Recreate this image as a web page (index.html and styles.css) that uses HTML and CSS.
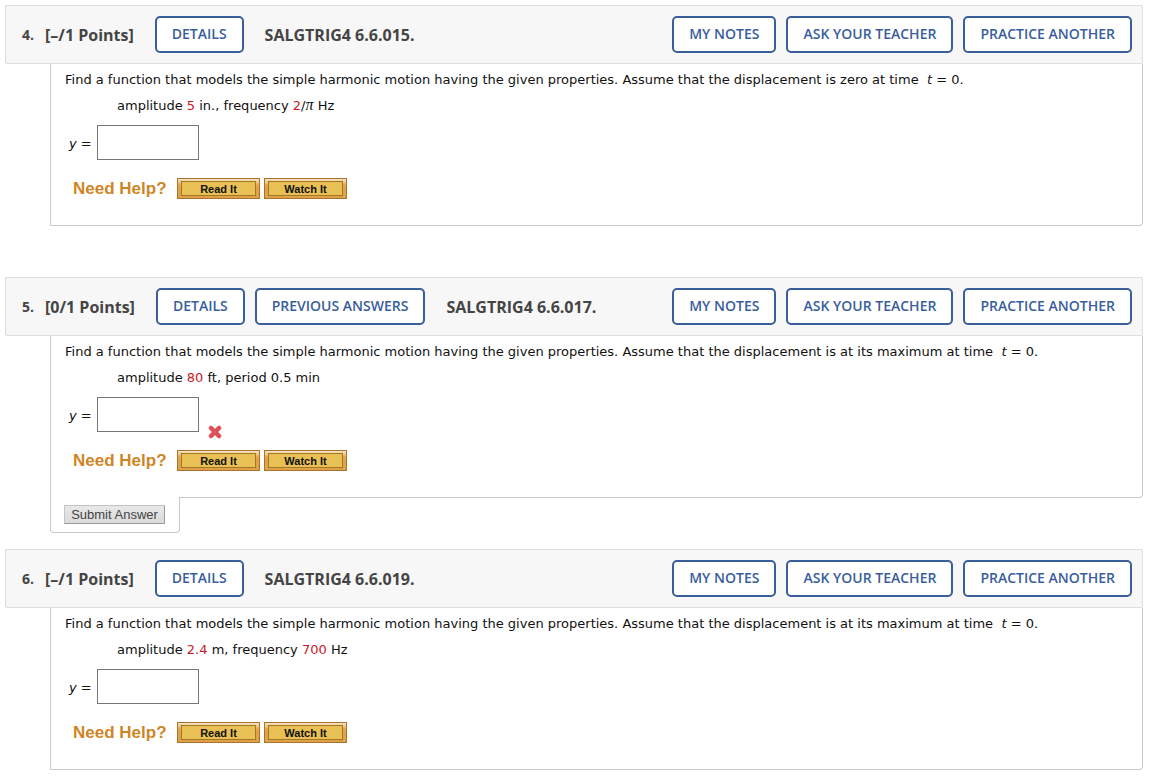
FILE: index.html
```
<!DOCTYPE html>
<html lang="en">
<head>
    <meta charset="UTF-8">
    <meta name="viewport" content="width=device-width, initial-scale=1.0">
    <title>Simple Harmonic Motion</title>
    <link rel="stylesheet" href="styles.css">
</head>
<body>

<section class="question">
    <div class="question-header">
        <span class="number">4.</span>
        <span class="points">[–/1 Points]</span>
        <div class="button-group">
            <button class="btn">DETAILS</button>
        </div>
        <span class="title">SALGTRIG4 6.6.015.</span>
        <div class="button-group actions">
            <button class="btn">MY NOTES</button>
            <button class="btn">ASK YOUR TEACHER</button>
            <button class="btn">PRACTICE ANOTHER</button>
        </div>
    </div>
    <div class="question-body">
        <p>Find a function that models the simple harmonic motion having the given properties. Assume that the displacement is zero at time &nbsp;<i>t</i> = 0.</p>
        <p class="given">amplitude <span class="value">5</span> in., frequency <span class="value">2</span>/<span class="pi">π</span> Hz</p>
        <div class="answer">
            <label for="answer4"><i>y</i> =</label>
            <input type="text" id="answer4">
        </div>
        <div class="help">
            <span class="help-label">Need Help?</span>
            <button class="help-btn"><span>Read It</span></button>
            <button class="help-btn"><span>Watch It</span></button>
        </div>
    </div>
</section>

<section class="question has-submit">
    <div class="question-header">
        <span class="number">5.</span>
        <span class="points">[0/1 Points]</span>
        <div class="button-group">
            <button class="btn">DETAILS</button>
            <button class="btn">PREVIOUS ANSWERS</button>
        </div>
        <span class="title">SALGTRIG4 6.6.017.</span>
        <div class="button-group actions">
            <button class="btn">MY NOTES</button>
            <button class="btn">ASK YOUR TEACHER</button>
            <button class="btn">PRACTICE ANOTHER</button>
        </div>
    </div>
    <div class="question-body">
        <p>Find a function that models the simple harmonic motion having the given properties. Assume that the displacement is at its maximum at time &nbsp;<i>t</i> = 0.</p>
        <p class="given">amplitude <span class="value">80</span> ft, period 0.5 min</p>
        <div class="answer">
            <label for="answer5"><i>y</i> =</label>
            <input type="text" id="answer5">
            <svg class="wrong" width="14" height="14" viewBox="0 0 14 14" role="img" aria-label="Incorrect">
                <path d="M2 1L4 1L7 4.200L10 1L12 1L13 2L13 4L9.800 7L13 10L13 12L12 13L10 13L7 9.800L4 13L2 13L1 12L1 10L4.200 7L1 4L1 2Z" fill="#d9474e" stroke="#e58b8e" stroke-width="1"/>
                <path d="M3 3L11 11M11 3L3 11" fill="none" stroke="#e0656a" stroke-width="1"/>
            </svg>
        </div>
        <div class="help">
            <span class="help-label">Need Help?</span>
            <button class="help-btn"><span>Read It</span></button>
            <button class="help-btn"><span>Watch It</span></button>
        </div>
    </div>
    <div class="submit-tab">
        <button class="submit-btn">Submit Answer</button>
    </div>
</section>

<section class="question">
    <div class="question-header">
        <span class="number">6.</span>
        <span class="points">[–/1 Points]</span>
        <div class="button-group">
            <button class="btn">DETAILS</button>
        </div>
        <span class="title">SALGTRIG4 6.6.019.</span>
        <div class="button-group actions">
            <button class="btn">MY NOTES</button>
            <button class="btn">ASK YOUR TEACHER</button>
            <button class="btn">PRACTICE ANOTHER</button>
        </div>
    </div>
    <div class="question-body">
        <p>Find a function that models the simple harmonic motion having the given properties. Assume that the displacement is at its maximum at time &nbsp;<i>t</i> = 0.</p>
        <p class="given">amplitude <span class="value">2.4</span> m, frequency <span class="value">700</span> Hz</p>
        <div class="answer">
            <label for="answer6"><i>y</i> =</label>
            <input type="text" id="answer6">
        </div>
        <div class="help">
            <span class="help-label">Need Help?</span>
            <button class="help-btn"><span>Read It</span></button>
            <button class="help-btn"><span>Watch It</span></button>
        </div>
    </div>
</section>

</body>
</html>
```

FILE: styles.css
```
* {
    box-sizing: border-box;
}

body {
    margin: 0;
    padding: 5px 13px 0 5px;
    background-color: #fff;
    color: #111;
    font-family: Verdana, "DejaVu Sans", sans-serif;
    font-size: 13px;
    line-height: 20px;
}

.question {
    margin-bottom: 51px;
}

.question.has-submit {
    margin-bottom: 16px;
}

.question:last-child {
    margin-bottom: 0;
}

.question-header {
    display: flex;
    align-items: center;
    padding: 10px 10px 10px 16px;
    background-color: #f7f7f7;
    border: 1px solid #dedede;
    border-radius: 2px;
    color: #444;
    font-family: "Open Sans", sans-serif;
    font-size: 16px;
    font-weight: 700;
}

.number {
    width: 23px;
    font-size: 14px;
}

.button-group {
    display: flex;
    gap: 10px;
    margin: 0 21px;
}

.actions {
    margin: 0 0 0 auto;
}

.btn {
    padding: 5px 15px 7px;
    background-color: #fff;
    border: 2px solid #3a5e9b;
    border-radius: 5px;
    color: #3a5e9b;
    font-family: "Open Sans", sans-serif;
    font-size: 14px;
    font-weight: 600;
    line-height: 21px;
    cursor: pointer;
}

.question-body {
    margin-left: 45px;
    padding: 6px 14px 26px;
    border: 1px solid #c8c8c8;
    border-top: none;
    border-radius: 0 0 4px 0;
}

p {
    margin: 0 0 6px;
}

.given {
    margin: 0 0 9px 52px;
}

.value {
    color: #c8191f;
}

.pi {
    font-family: "Liberation Serif", serif;
    font-size: 16px;
    font-style: italic;
    line-height: 16px;
}

.answer {
    display: flex;
    align-items: center;
    margin: 0 0 18px 4px;
}

.answer label {
    width: 28px;
    padding-top: 2px;
}

.answer input {
    width: 102px;
    height: 35px;
    padding: 4px;
    border: 1px solid #767676;
    font-size: 14px;
}

.wrong {
    align-self: flex-end;
    margin: 0 0 -7px 9px;
}

.help {
    display: flex;
    align-items: center;
    gap: 4px;
    height: 21px;
    margin-left: 8px;
}

.help-label {
    width: 100px;
    color: #cf8526;
    font-family: "Liberation Sans", Arial, sans-serif;
    font-size: 17px;
    font-weight: bold;
}

.help-btn {
    display: flex;
    width: 83px;
    height: 21px;
    padding: 2px 3px;
    background: linear-gradient(#f8e4c4, #e2a447 35%, #dfa048);
    border: 1px solid #a9752c;
    cursor: pointer;
}

.help-btn span {
    flex: 1;
    background-color: #e8c054;
    border: 1px solid #a07828;
    color: #111;
    font-family: "Liberation Sans", Arial, sans-serif;
    font-size: 11px;
    font-weight: bold;
    line-height: 14px;
}

/* hangs below the question and covers its bottom border */
.submit-tab {
    width: 130px;
    margin: -1px 0 0 45px;
    padding: 8px 13px;
    position: relative;
    background-color: #fff;
    border: 1px solid #c8c8c8;
    border-top: none;
    border-radius: 0 0 4px 4px;
}

.submit-btn {
    display: block;
    width: 101px;
    height: 19px;
    padding: 0;
    background: linear-gradient(#e8e8e8, #dadada);
    border: 1px solid #c4c4c4;
    border-right-color: #999;
    border-bottom-color: #999;
    color: #444;
    font-family: "Liberation Sans", Arial, sans-serif;
    font-size: 13px;
    cursor: pointer;
}
```
